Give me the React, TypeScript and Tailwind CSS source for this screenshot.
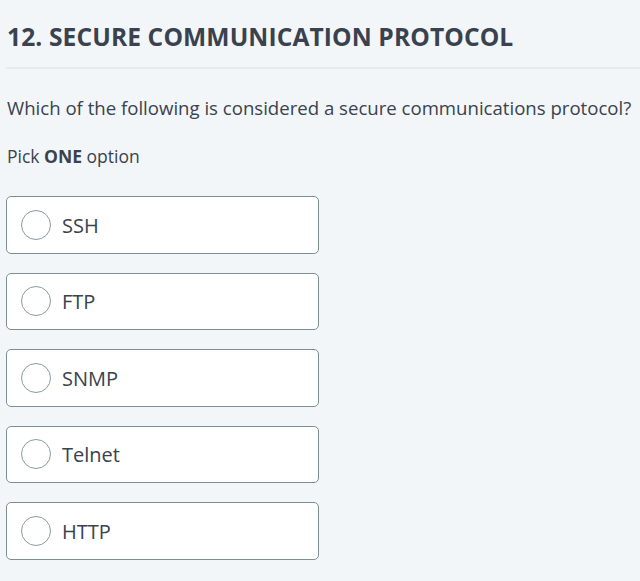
const options = ['SSH', 'FTP', 'SNMP', 'Telnet', 'HTTP'];

export default function App() {
  return (
    <div
      className="min-h-[581px] w-[640px] bg-[#f3f6f8] text-[#39424e] overflow-hidden"
      style={{ fontFamily: '"Open Sans", sans-serif' }}
    >
      <div className="pl-[6px]">
        <h1 className="pt-[21px] pb-[14px] pl-px text-[24.6px] leading-[32px] font-bold tracking-[0.1px] uppercase">
          12. Secure Communication Protocol
        </h1>
        <div className="h-[2px] bg-[#e6ebee]" />
        <p className="mt-[25px] pl-px text-[18.6px] leading-[28px] whitespace-nowrap">
          Which of the following is considered a secure communications protocol?
        </p>
        <p className="mt-[22px] pl-px text-[17.5px] leading-[24px]">
          Pick <span className="font-bold">ONE</span> option
        </p>
        <div className="mt-[28px] flex flex-col gap-[19px]">
          {options.map((o) => (
            <label
              key={o}
              className="w-[313px] h-[57.5px] flex items-center gap-[11px] pl-[14px] bg-white border border-[#7d8f96] rounded-[5px] cursor-pointer"
            >
              <span className="w-[30px] h-[30px] rounded-full border border-[#8a9aa0] bg-white shrink-0" />
              <span className="pt-[2px] text-[20px] leading-[26px] text-[#39424e]">{o}</span>
            </label>
          ))}
        </div>
      </div>
    </div>
  );
}
